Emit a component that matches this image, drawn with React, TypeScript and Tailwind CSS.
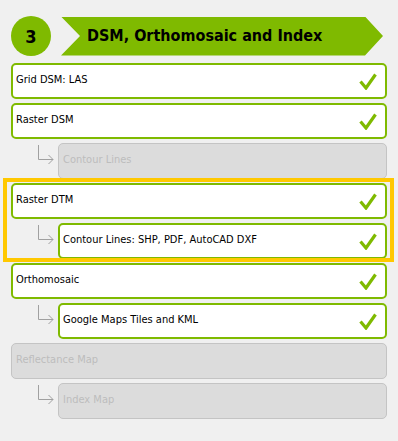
import React from "react";

const GREEN = "#7fba00";

function Check() {
  return (
    <svg width="18" height="17" viewBox="0 0 18 17" className="absolute right-[8px] bottom-[7px]">
      <polyline points="1.5,8.5 7,15 16.5,1.5" fill="none" stroke={GREEN} strokeWidth="3.2" strokeLinecap="butt" strokeLinejoin="miter" />
    </svg>
  );
}

function Arrow() {
  return (
    <svg width="20" height="22" viewBox="0 0 20 22" className="absolute left-[26px] top-[1px]">
      <polyline points="1.5,1 1.5,15.5 16,15.5" fill="none" stroke="#a0a0a0" strokeWidth="1" />
      <polyline points="11.5,11 16,15.5 11.5,20" fill="none" stroke="#a0a0a0" strokeWidth="1" />
    </svg>
  );
}

function Box({ label, done }: { label: string; done: boolean }) {
  return done ? (
    <div className="relative h-[36px] flex-1 rounded-[5px] border-2 border-[#7fba00] bg-white pl-[3px] pt-[7px] text-[11px] leading-[15px] text-black">
      {label}
      <Check />
    </div>
  ) : (
    <div className="relative h-[36px] flex-1 rounded-[5px] border border-[#c4c4c4] bg-[#dcdcdc] pl-[4px] pt-[8px] text-[11px] leading-[15px] text-[#bdbdbd]">
      {label}
    </div>
  );
}

function Row({ label, done }: { label: string; done: boolean }) {
  return (
    <div className="flex">
      <Box label={label} done={done} />
    </div>
  );
}

function SubRow({ label, done }: { label: string; done: boolean }) {
  return (
    <div className="relative flex pl-[47px]">
      <Arrow />
      <Box label={label} done={done} />
    </div>
  );
}

export default function App() {
  return (
    <div
      className="relative w-[398px] h-[441px] bg-[#f0f0f0] overflow-hidden font-stretch-condensed"
      style={{ fontFamily: "'DejaVu Sans Condensed', 'DejaVu Sans', Tahoma, sans-serif" }}
    >
      <div className="flex items-center pt-[16px] pl-[11px]">
        <div className="flex h-[40px] w-[40px] items-center justify-center rounded-full bg-[#7fba00] text-[18px] font-bold text-black">
          3
        </div>
        <div className="ml-[10px] flex h-[39px] w-[322px] items-center bg-[#7fba00] pl-[26px] text-[16px] font-bold text-black [clip-path:polygon(0_0,304px_0,100%_50%,304px_100%,0_100%,19px_50%)]">
          DSM, Orthomosaic and Index
        </div>
      </div>
      <div className="mt-[7px] ml-[11px] flex w-[376px] flex-col gap-[4px]">
        <Row label="Grid DSM: LAS" done />
        <Row label="Raster DSM" done />
        <SubRow label="Contour Lines" done={false} />
        <div className="relative flex flex-col gap-[4px]">
          <Row label="Raster DTM" done />
          <SubRow label="Contour Lines: SHP, PDF, AutoCAD DXF" done />
          <div className="pointer-events-none absolute -top-[5px] -bottom-[3px] -left-[8px] -right-[7px] border-4 border-[#ffc800]" />
        </div>
        <Row label="Orthomosaic" done />
        <SubRow label="Google Maps Tiles and KML" done />
        <Row label="Reflectance Map" done={false} />
        <SubRow label="Index Map" done={false} />
      </div>
    </div>
  );
}
